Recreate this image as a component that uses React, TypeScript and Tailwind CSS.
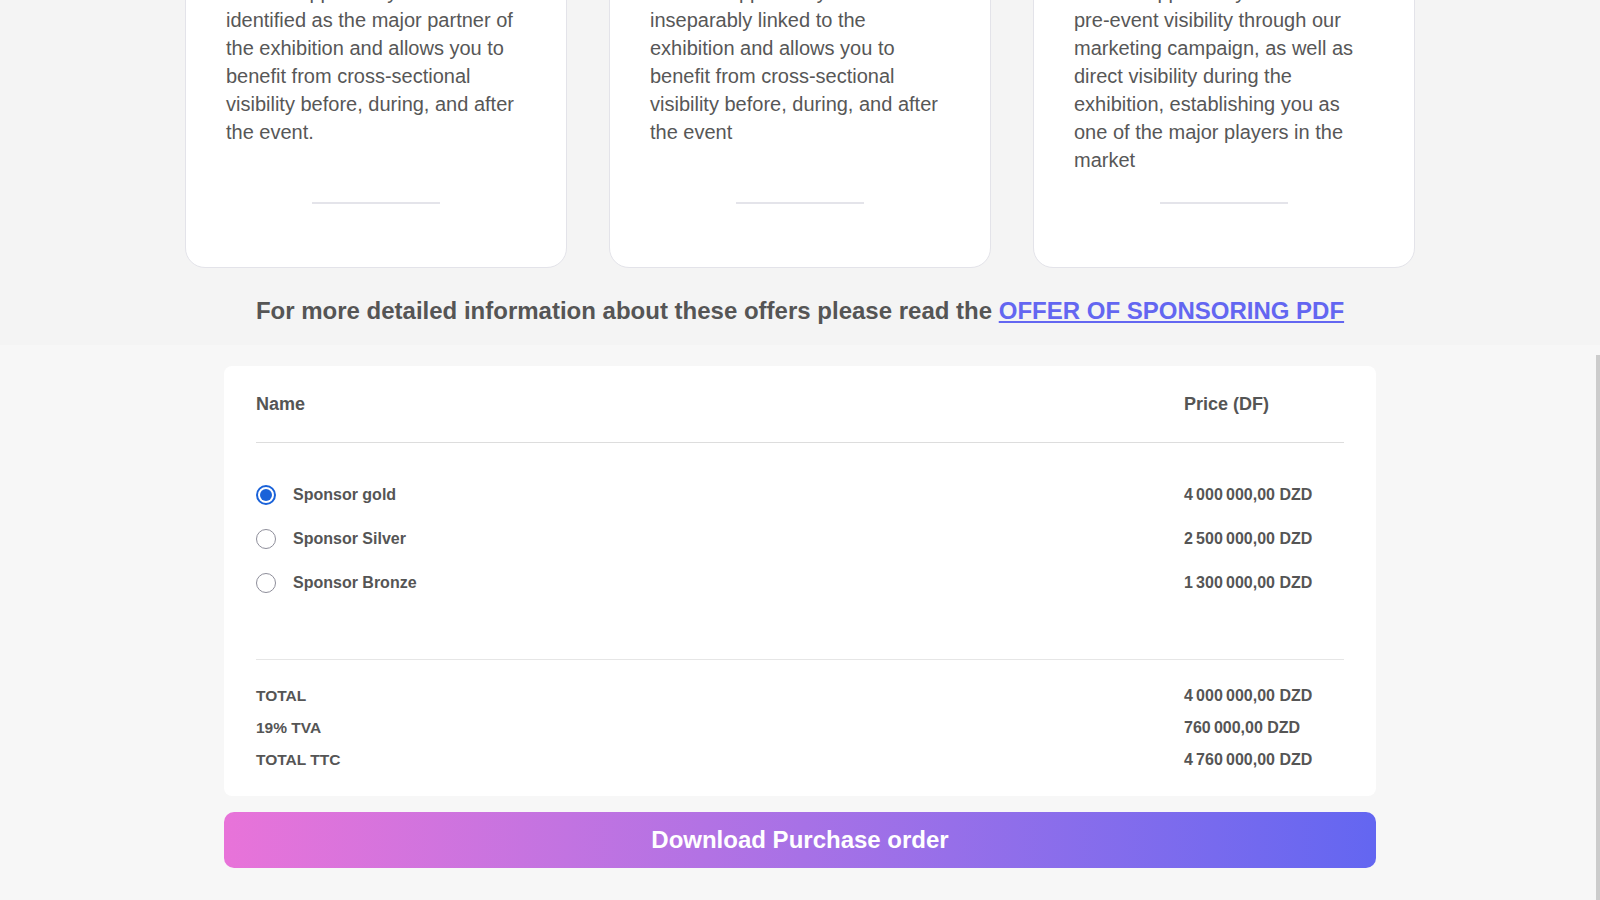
import React from "react";

const cards: string[][] = [
  [
    "An elite opportunity to be",
    "identified as the major partner of",
    "the exhibition and allows you to",
    "benefit from cross-sectional",
    "visibility before, during, and after",
    "the event.",
  ],
  [
    "An ideal opportunity to become",
    "inseparably linked to the",
    "exhibition and allows you to",
    "benefit from cross-sectional",
    "visibility before, during, and after",
    "the event",
  ],
  [
    "An elite opportunity for",
    "pre-event visibility through our",
    "marketing campaign, as well as",
    "direct visibility during the",
    "exhibition, establishing you as",
    "one of the major players in the",
    "market",
  ],
];

const NB = "\u202f";

const rows = [
  { name: "Sponsor gold", price: `4${NB}000${NB}000,00 DZD`, checked: true },
  { name: "Sponsor Silver", price: `2${NB}500${NB}000,00 DZD`, checked: false },
  { name: "Sponsor Bronze", price: `1${NB}300${NB}000,00 DZD`, checked: false },
];

const totals = [
  { label: "TOTAL", value: `4${NB}000${NB}000,00 DZD` },
  { label: "19% TVA", value: `760${NB}000,00 DZD` },
  { label: "TOTAL TTC", value: `4${NB}760${NB}000,00 DZD` },
];

function Radio({ checked }: { checked: boolean }) {
  if (checked) {
    return (
      <span className="flex h-5 w-5 shrink-0 items-center justify-center rounded-full border-2 border-[#1a62d9] bg-white">
        <span className="h-3 w-3 rounded-full bg-[#1a62d9]" />
      </span>
    );
  }
  return <span className="h-5 w-5 shrink-0 rounded-full border-[1.5px] border-[#8e8e9a] bg-white" />;
}

export default function App() {
  return (
    <div className="relative h-[900px] w-[1600px] overflow-hidden bg-[#f7f7f7] font-['Liberation_Sans',Arial,sans-serif] text-[#555555]">
      {/* Top section with offer cards */}
      <section className="bg-[#f4f4f4] pb-[18px]">
        <div className="mx-auto -mt-[63px] grid w-[1230px] grid-cols-3 gap-[42px]">
          {cards.map((lines, i) => (
            <div
              key={i}
              className="flex flex-col rounded-[20px] border border-[#e3e3e9] bg-white px-10 pb-[63px] pt-10"
            >
              <p className="flex-1 whitespace-nowrap text-[20px] leading-7 text-[#575757]">
                {lines.map((l, j) => (
                  <React.Fragment key={j}>
                    {l}
                    {j < lines.length - 1 && <br />}
                  </React.Fragment>
                ))}
              </p>
              <div className="mx-auto mt-[28px] h-[2px] w-[128px] bg-[#e4e4ea]" />
            </div>
          ))}
        </div>
        <p className="mt-[27px] whitespace-nowrap text-center text-[24px] font-bold leading-8 text-[#555555]">
          For more detailed information about these offers please read the{" "}
          <a href="#" className="text-[#6366f1] underline decoration-2 underline-offset-2">
            OFFER OF SPONSORING PDF
          </a>
        </p>
      </section>

      {/* Lower section with table */}
      <section className="pt-[21px]">
        <div className="mx-auto w-[1152px]">
          <div className="rounded-lg bg-white px-8 pb-5 pt-[26px]">
            <div className="grid grid-cols-[1fr_160px] border-b border-[#dddddd] pb-[26px] text-[18px] font-bold leading-6">
              <span>Name</span>
              <span className="whitespace-nowrap">Price (DF)</span>
            </div>
            <div className="border-b border-[#e6e6e6] pb-[54px] pt-[30px]">
              {rows.map((r) => (
                <div key={r.name} className="grid h-11 grid-cols-[1fr_160px] items-center text-[16px] font-bold">
                  <label className="flex items-center gap-[17px]">
                    <Radio checked={r.checked} />
                    <span>{r.name}</span>
                  </label>
                  <span className="whitespace-nowrap">{r.price}</span>
                </div>
              ))}
            </div>
            <div className="pt-5">
              {totals.map((t) => (
                <div key={t.label} className="grid h-8 grid-cols-[1fr_160px] items-center font-bold">
                  <span className="text-[15.5px]">{t.label}</span>
                  <span className="whitespace-nowrap text-[16px]">{t.value}</span>
                </div>
              ))}
            </div>
          </div>
          <button className="mt-4 flex h-14 w-full items-center justify-center rounded-[10px] bg-linear-to-r from-[#e873d9] to-[#6366f1] text-[24px] font-bold text-white">
            Download Purchase order
          </button>
        </div>
      </section>

      {/* Scrollbar thumb */}
      <div className="absolute bottom-0 right-0 top-[355px] w-[4px] bg-[#cccccc]" />
    </div>
  );
}
